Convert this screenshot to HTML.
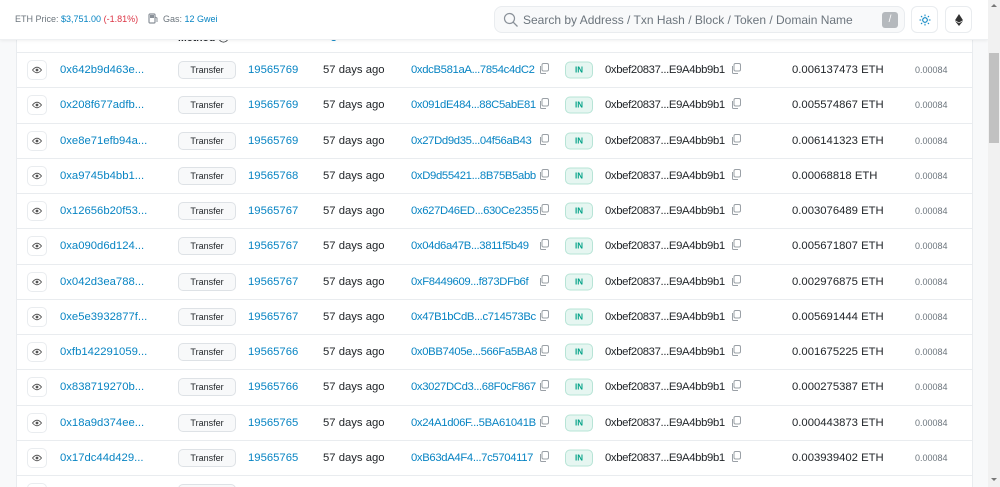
<!DOCTYPE html>
<html><head><meta charset="utf-8"><style>
*{margin:0;padding:0;box-sizing:border-box}
html,body{width:1000px;height:487px;overflow:hidden}
body{background:#f8f9fa;font-family:"Liberation Sans",sans-serif;font-size:11.3px;color:#212529;position:relative}
.card{position:absolute;left:16px;top:0;width:957px;height:487px;background:#fff;border-left:1px solid #e9ecef;border-right:1px solid #e9ecef}
.hdr{position:absolute;left:0;top:0;width:988px;height:40px;background:#fff;box-shadow:0 1px 3px rgba(0,0,0,.06);z-index:5;border-bottom:1px solid #eef0f2}
.sb{position:absolute;left:988px;top:0;width:12px;height:487px;background:#f1f1f1;z-index:6}
.thumb{position:absolute;left:1px;top:53px;width:10px;height:90px;background:#c1c1c1}
#rows{position:absolute;left:0;top:0;width:1000px;height:487px;overflow:hidden}
.row{position:absolute;left:16px;width:957px;height:35.25px;border-top:1px solid #e9ecef}
.a{position:absolute;top:50%;transform:translateY(-50%);white-space:nowrap}
.l{color:#0784c3}
.eye{left:11px;width:20px;height:20px;border:1px solid #e9ecef;border-radius:5px;display:flex;align-items:center;justify-content:center}
.tr{left:162px;width:58px;height:18px;border:1px solid #dee2e6;background:#f8f9fa;border-radius:5px;font-size:9px;text-align:center;line-height:16px;color:#212529}
.in{left:549px;width:28px;height:17px;border:1px solid #b7e4d6;background:#e6f6f1;border-radius:5px;font-size:8px;font-weight:bold;color:#00a186;text-align:center;line-height:15px}
.cp{width:10px;height:11px}
.fee{color:#6c757d;font-size:9px;left:899px}
.th{position:absolute;top:30px;font-size:10.5px;font-weight:bold;color:#212529}
.sq{letter-spacing:-0.35px}
</style></head><body>
<div class="card"></div>
<div class="th" style="left:60px">Transaction Hash</div>
<div class="th" style="left:178px">Method ⓘ</div>
<div class="th" style="left:248px">Block</div>
<div class="th" style="left:323px;color:#0784c3">Age</div>
<div class="th" style="left:411px">From</div>
<div class="th" style="left:605px">To</div>
<div class="th" style="left:792px">Value</div>
<div class="th" style="left:915px;color:#0784c3">Txn Fee</div>
<div id="rows"></div>
<div class="hdr">
 <div style="position:absolute;left:15px;top:14px;font-size:9px;color:#6c757d">ETH Price: <span class="l">$3,751.00</span> <span style="color:#dc3545">(-1.81%)</span></div>
 <svg style="position:absolute;left:148px;top:13px" width="10" height="11" viewBox="0 0 10 11"><rect x="1" y="1" width="6" height="9" rx="1" fill="none" stroke="#8a9199" stroke-width="1.2"/><rect x="2" y="2" width="4" height="3" fill="#8a9199"/><path d="M7 4 L9 5 V9" stroke="#8a9199" fill="none"/></svg>
 <div style="position:absolute;left:163px;top:14px;font-size:9px;color:#6c757d">Gas: <span class="l">12 Gwei</span></div>
 <div style="position:absolute;left:494px;top:6px;width:411px;height:27px;background:#f8f9fa;border:1px solid #e9ecef;border-radius:8px">
  <svg style="position:absolute;left:8px;top:5px" width="16" height="16" viewBox="0 0 16 16"><circle cx="6.5" cy="6.5" r="5" fill="none" stroke="#8a9199" stroke-width="1.2"/><path d="M10.2 10.2 L14.5 14.5" stroke="#8a9199" stroke-width="1.3"/></svg>
  <div style="position:absolute;left:28px;top:6px;font-size:12px;color:#6c757d">Search by Address / Txn Hash / Block / Token / Domain Name</div>
  <div style="position:absolute;left:387px;top:5px;width:16px;height:16px;background:#b5b9bd;border-radius:3px;color:#fff;font-size:10px;text-align:center;line-height:16px">/</div>
 </div>
 <div style="position:absolute;left:911px;top:6px;width:27px;height:27px;border:1px solid #e9ecef;border-radius:6px;display:flex;align-items:center;justify-content:center"><svg width="12" height="12" viewBox="0 0 12 12"><circle cx="6" cy="6" r="2.3" fill="none" stroke="#0784c3" stroke-width="1.1"/><g stroke="#0784c3" stroke-width="1"><path d="M6 0.5V2.2M6 9.8V11.5M0.5 6H2.2M9.8 6H11.5M2 2L3.2 3.2M8.8 8.8L10 10M2 10L3.2 8.8M8.8 3.2L10 2"/></g></svg></div>
 <div style="position:absolute;left:945px;top:6px;width:27px;height:27px;border:1px solid #e9ecef;border-radius:6px;display:flex;align-items:center;justify-content:center"><svg width="8" height="12" viewBox="0 0 8 12"><path d="M4 0L0 6.2L4 8.5L8 6.2Z" fill="#333"/><path d="M4 9.3L0 7L4 12L8 7Z" fill="#333"/></svg></div>
</div>
<div class="sb"><div class="thumb"></div><div style="position:absolute;left:3px;top:4px;border:3px solid transparent;border-bottom:3px solid #777;border-top:0"></div><div style="position:absolute;left:3px;top:478px;border:3px solid transparent;border-top:3px solid #777;border-bottom:0"></div></div>
<script>
const d=[["0x642b9d463e...","19565769","0xdcB581aA...7854c4dC2","0.006137473 ETH"],
["0x208f677adfb...","19565769","0x091dE484...88C5abE81","0.005574867 ETH"],
["0xe8e71efb94a...","19565769","0x27Dd9d35...04f56aB43","0.006141323 ETH"],
["0xa9745b4bb1...","19565768","0xD9d55421...8B75B5abb","0.00068818 ETH"],
["0x12656b20f53...","19565767","0x627D46ED...630Ce2355","0.003076489 ETH"],
["0xa090d6d124...","19565767","0x04d6a47B...3811f5b49","0.005671807 ETH"],
["0x042d3ea788...","19565767","0xF8449609...f873DFb6f","0.002976875 ETH"],
["0xe5e3932877f...","19565767","0x47B1bCdB...c714573Bc","0.005691444 ETH"],
["0xfb142291059...","19565766","0x0BB7405e...566Fa5BA8","0.001675225 ETH"],
["0x838719270b...","19565766","0x3027DCd3...68F0cF867","0.000275387 ETH"],
["0x18a9d374ee...","19565765","0x24A1d06F...5BA61041B","0.000443873 ETH"],
["0x17dc44d429...","19565765","0xB63dA4F4...7c5704117","0.003939402 ETH"],
["","","",""]];
const cp='<svg class="cp" viewBox="0 0 10 11"><rect x="3" y="0.5" width="6.5" height="7.5" rx="1.5" fill="none" stroke="#9aa0a6"/><path d="M1.5 3V9.5Q1.5 10.5 2.5 10.5H7" fill="none" stroke="#9aa0a6"/></svg>';
const eye='<svg width="10" height="8" viewBox="0 0 10 8"><path d="M0.5 4Q5 -1.5 9.5 4Q5 9.5 0.5 4Z" fill="none" stroke="#555" stroke-width="0.9"/><circle cx="5" cy="4" r="1.4" fill="#555"/></svg>';
let h='';
d.forEach((r,i)=>{const t=52+i*35.25;
if(!r[0]){h+=`<div class="row" style="top:${t}px"><div class="a eye">${eye}</div><div class="a tr"></div></div>`;return;}
h+=`<div class="row" style="top:${t}px"><div class="a eye">${eye}</div>
<div class="a l" style="left:44px">${r[0]}</div><div class="a tr">Transfer</div>
<div class="a l" style="left:232px">${r[1]}</div><div class="a" style="left:307px">57 days ago</div>
<div class="a l sq" style="left:395px">${r[2]}</div><div class="a" style="left:523px;top:17px">${cp}</div>
<div class="a in">IN</div>
<div class="a sq" style="left:589px">0xbef20837...E9A4bb9b1</div><div class="a" style="left:715px;top:17px">${cp}</div>
<div class="a" style="left:776px">${r[3]}</div><div class="a fee">0.00084</div></div>`;});
document.getElementById('rows').innerHTML=h;
</script>
</body></html>
